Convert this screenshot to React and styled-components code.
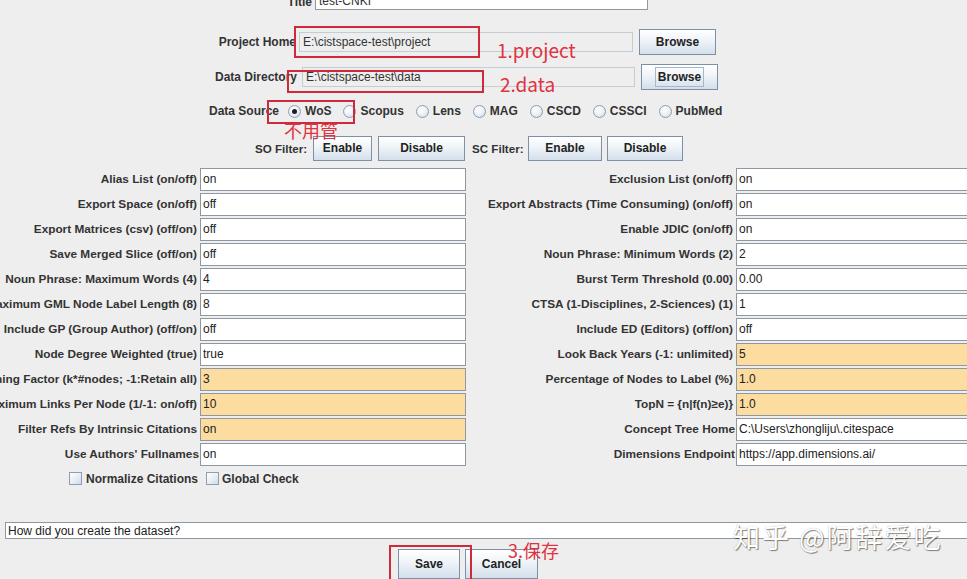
import React from "react";
import styled, { createGlobalStyle, css } from "styled-components";

const UI_FONT = `"Liberation Sans", Arial, sans-serif`;
const CJK_FONT = `"Noto Sans CJK SC", "Noto Sans", sans-serif`;

const Global = createGlobalStyle`
  html, body {
    margin: 0;
    padding: 0;
    background: #eeeeee;
    overflow: hidden;
  }
  body {
    font-family: ${UI_FONT};
    font-size: 12px;
    color: #333;
  }
`;

const Frame = styled.div`
  position: relative;
  width: 1000px;
  height: 579px;
  display: flex;
  flex-direction: column;
`;

/* ---------- top form rows ---------- */

const PathRow = styled.div`
  display: flex;
  align-items: ${(p) => p.$align || "center"};
  height: ${(p) => p.$h}px;
  margin-top: ${(p) => p.$top}px;
`;

const RowLabel = styled.div`
  box-sizing: border-box;
  width: ${(p) => p.$w}px;
  padding-right: ${(p) => p.$pad}px;
  padding-bottom: ${(p) => p.$lift || 0}px;
  text-align: right;
  font-weight: bold;
  color: #333;
  white-space: nowrap;
  flex: none;
`;

const PathField = styled.div`
  box-sizing: border-box;
  width: ${(p) => p.$w}px;
  height: ${(p) => p.$h || 20}px;
  margin-right: 6px;
  border: 1px solid ${(p) => (p.$plain ? "#8e98a2" : "#c4ccd4")};
  background: ${(p) => (p.$plain ? "#ffffff" : "#eeeeee")};
  color: #333;
  padding: 0 3px ${(p) => p.$lift || 0}px;
  display: flex;
  align-items: ${(p) => p.$align || "center"};
  white-space: nowrap;
  flex: none;
`;

const Button = styled.button`
  box-sizing: border-box;
  width: ${(p) => p.$w}px;
  height: ${(p) => p.$h || 25}px;
  margin: 0;
  padding: 0;
  flex: none;
  border: 1px solid #7d90a6;
  border-radius: 0;
  background: linear-gradient(to bottom, #ffffff 0%, #f1f5f9 40%, #d3dfeb 100%);
  font-family: ${UI_FONT};
  font-weight: bold;
  font-size: 12px;
  color: #222;
  display: flex;
  align-items: center;
  justify-content: center;
`;

const FocusText = styled.span`
  padding: 2px 2px;
  outline: ${(p) => (p.$focused ? "1px solid #a9b6c6" : "none")};
`;

/* ---------- radios and checkboxes ---------- */

const OptionRow = styled.div`
  display: flex;
  align-items: center;
  height: 20px;
  margin-top: ${(p) => p.$top}px;
  padding-left: ${(p) => p.$indent}px;
  gap: ${(p) => p.$gap}px;
  font-weight: bold;
  color: #333;
  white-space: nowrap;
`;

const OptionCaption = styled.span`
  margin-right: -3px;
`;

const Option = styled.label`
  display: flex;
  align-items: center;
  gap: ${(p) => p.$gap || 4}px;
`;

const Radio = styled.span`
  position: relative;
  box-sizing: border-box;
  width: 13px;
  height: 13px;
  border-radius: 50%;
  border: 1px solid #8d9eb2;
  background: radial-gradient(circle at 40% 35%, #ffffff 0%, #edf2f7 45%, #c9d6e3 100%);
  flex: none;
  ${(p) =>
    p.$checked &&
    css`
      &::after {
        content: "";
        position: absolute;
        left: 3px;
        top: 3px;
        width: 5px;
        height: 5px;
        border-radius: 50%;
        background: #1e1e1e;
      }
    `}
`;

const Check = styled.span`
  box-sizing: border-box;
  width: 13px;
  height: 13px;
  border: 1px solid #8d9eb2;
  background: linear-gradient(135deg, #ffffff 0%, #e9eff5 50%, #cfdbe7 100%);
  flex: none;
`;

/* ---------- filter buttons ---------- */

const FilterRow = styled.div`
  display: flex;
  align-items: center;
  height: 25px;
  margin-top: 16px;
  padding-left: 255px;
  font-weight: bold;
  font-size: 11.6px;
  color: #333;
  white-space: nowrap;
`;

const FilterLabel = styled.span`
  width: ${(p) => p.$w}px;
  flex: none;
`;

const Spacer = styled.span`
  width: ${(p) => p.$w}px;
  flex: none;
`;

/* ---------- parameter grid ---------- */

const ParamGrid = styled.div`
  display: grid;
  grid-template-columns: 200px 266px 270px 264px;
  grid-auto-rows: 25px;
  margin-top: 7px;
  width: 1000px;
`;

const ParamLabel = styled.div`
  display: flex;
  justify-content: flex-end;
  align-items: center;
  padding-right: ${(p) => (p.$tight ? 1 : 3)}px;
  height: 23px;
  font-weight: bold;
  font-size: 11.8px;
  color: #333;
  white-space: nowrap;
  min-width: 0;
`;

const ParamField = styled.div`
  box-sizing: border-box;
  height: 23px;
  border: 1px solid #8e98a2;
  background: ${(p) => (p.$warm ? "#fddc9f" : "#ffffff")};
  padding: 0 2px;
  display: flex;
  align-items: center;
  color: #222;
  white-space: nowrap;
  overflow: hidden;
`;

/* ---------- footer ---------- */

const NoteField = styled.div`
  box-sizing: border-box;
  margin-top: 35px;
  margin-left: 5px;
  width: 990px;
  height: 20px;
  border: 1px solid #8e98a2;
  background: #ffffff;
  padding: 0 2px;
  display: flex;
  align-items: center;
  color: #222;
`;

const ActionRow = styled.div`
  display: flex;
  gap: 5px;
  margin-top: 10px;
  padding-left: 398px;
`;

/* ---------- annotations drawn on top ---------- */

const MarkBox = styled.div`
  position: absolute;
  box-sizing: border-box;
  left: ${(p) => p.$x}px;
  top: ${(p) => p.$y}px;
  width: ${(p) => p.$w}px;
  height: ${(p) => p.$h}px;
  border: 2px solid #cf2a3b;
  pointer-events: none;
`;

const MarkText = styled.div`
  position: absolute;
  left: ${(p) => p.$x}px;
  top: ${(p) => p.$y}px;
  font-family: ${CJK_FONT};
  font-size: ${(p) => p.$size}px;
  line-height: 1;
  color: #e0323f;
  white-space: nowrap;
`;

const Watermark = styled.div`
  position: absolute;
  left: 733px;
  top: 523px;
  font-family: ${CJK_FONT};
  font-size: 27px;
  line-height: 1;
  color: #ffffff;
  letter-spacing: 2px;
  text-shadow: 1px 1px 1px rgba(0, 0, 0, 0.45), 0 0 1px rgba(0, 0, 0, 0.35);
  white-space: nowrap;
`;

const leftParams = [
  ["Alias List (on/off)", "on"],
  ["Export Space (on/off)", "off"],
  ["Export Matrices (csv) (off/on)", "off"],
  ["Save Merged Slice (off/on)", "off"],
  ["Noun Phrase: Maximum Words (4)", "4"],
  ["Maximum GML Node Label Length (8)", "8"],
  ["Include GP (Group Author) (off/on)", "off"],
  ["Node Degree Weighted (true)", "true"],
  ["Pruning Factor (k*#nodes; -1:Retain all)", "3", true],
  ["Maximum Links Per Node (1/-1: on/off)", "10", true],
  ["Filter Refs By Intrinsic Citations", "on", true],
  ["Use Authors' Fullnames", "on", false, true],
];

const rightParams = [
  ["Exclusion List (on/off)", "on"],
  ["Export Abstracts (Time Consuming) (on/off)", "on"],
  ["Enable JDIC (on/off)", "on"],
  ["Noun Phrase: Minimum Words (2)", "2"],
  ["Burst Term Threshold (0.00)", "0.00"],
  ["CTSA (1-Disciplines, 2-Sciences) (1)", "1"],
  ["Include ED (Editors) (off/on)", "off"],
  ["Look Back Years (-1: unlimited)", "5", true],
  ["Percentage of Nodes to Label (%)", "1.0", true],
  ["TopN = {n|f(n)\u2265e)}", "1.0", true],
  ["Concept Tree Home", "C:\\Users\\zhongliju\\.citespace", false, true],
  ["Dimensions Endpoint", "https://app.dimensions.ai/", false, true],
];

const sources = ["WoS", "Scopus", "Lens", "MAG", "CSCD", "CSSCI", "PubMed"];

export default function App() {
  return (
    <>
      <Global />
      <Frame>
        <PathRow $h={21} $top={-11} $align="flex-end">
          <RowLabel $w={315} $pad={3} $lift={1}>
            Title
          </RowLabel>
          <PathField $w={333} $h={21} $plain $align="flex-end" $lift={1}>
            test-CNKI
          </PathField>
        </PathRow>

        <PathRow $h={26} $top={19}>
          <RowLabel $w={299} $pad={3}>
            Project Home
          </RowLabel>
          <PathField $w={334}>E:\cistspace-test\project</PathField>
          <Button $w={77} $h={26}>
            <FocusText>Browse</FocusText>
          </Button>
        </PathRow>

        <PathRow $h={26} $top={9}>
          <RowLabel $w={302} $pad={5}>
            Data Directory
          </RowLabel>
          <PathField $w={333}>E:\cistspace-test\data</PathField>
          <Button $w={77} $h={26}>
            <FocusText $focused>Browse</FocusText>
          </Button>
        </PathRow>

        <OptionRow $top={13} $indent={209} $gap={12}>
          <OptionCaption>Data Source</OptionCaption>
          {sources.map((s, i) => (
            <Option key={s}>
              <Radio $checked={i === 0} />
              {s}
            </Option>
          ))}
        </OptionRow>

        <FilterRow>
          <FilterLabel $w={58}>SO Filter:</FilterLabel>
          <Button $w={59}>Enable</Button>
          <Spacer $w={6} />
          <Button $w={87}>Disable</Button>
          <Spacer $w={7} />
          <FilterLabel $w={56}>SC Filter:</FilterLabel>
          <Button $w={74}>Enable</Button>
          <Spacer $w={5} />
          <Button $w={76}>Disable</Button>
        </FilterRow>

        <ParamGrid>
          {leftParams.map(([label, value, warm, tight], i) => {
            const [rLabel, rValue, rWarm, rTight] = rightParams[i];
            return (
              <React.Fragment key={label}>
                <ParamLabel $tight={tight}>
                  <span>{label}</span>
                </ParamLabel>
                <ParamField $warm={warm}>{value}</ParamField>
                <ParamLabel $tight={rTight}>
                  <span>{rLabel}</span>
                </ParamLabel>
                <ParamField $warm={rWarm}>{rValue}</ParamField>
              </React.Fragment>
            );
          })}
        </ParamGrid>

        <OptionRow $top={3} $indent={69} $gap={8}>
          <Option>
            <Check />
            Normalize Citations
          </Option>
          <Option $gap={3}>
            <Check />
            Global Check
          </Option>
        </OptionRow>

        <NoteField>How did you create the dataset?</NoteField>

        <ActionRow>
          <Button $w={62} $h={30}>
            Save
          </Button>
          <Button $w={73} $h={30}>
            Cancel
          </Button>
        </ActionRow>

        <MarkBox $x={294} $y={26} $w={186} $h={32} />
        <MarkText $x={497} $y={40} $size={19}>
          1.project
        </MarkText>
        <MarkBox $x={287} $y={70} $w={197} $h={23} />
        <MarkText $x={500} $y={74} $size={19}>
          2.data
        </MarkText>
        <MarkBox $x={267} $y={100} $w={88} $h={24} />
        <MarkText $x={284} $y={121} $size={18}>
          不用管
        </MarkText>
        <MarkBox $x={389} $y={545} $w={83} $h={40} />
        <MarkText $x={508} $y={541} $size={18}>
          3.保存
        </MarkText>
        <Watermark>知乎 @阿辞爱吃</Watermark>
      </Frame>
    </>
  );
}
